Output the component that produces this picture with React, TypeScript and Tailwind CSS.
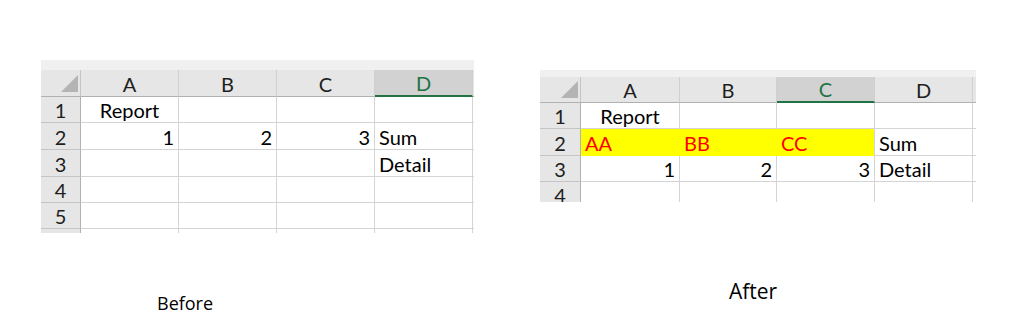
type Cell = { t?: string; align?: 'l' | 'r' | 'c'; red?: boolean; fill?: boolean; lastFill?: boolean };

type Row = { h: string; label: string; cells: Cell[] };

type SheetProps = {
  box: string;
  strip: string;
  header: string;
  widths: string[];
  letters: string[];
  selected: number;
  rows: Row[];
};

const cellFont = "font-['Lato',sans-serif] text-[20px] leading-[20px]";

function Corner({ w }: { w: string }) {
  return (
    <div className={`${w} flex h-full shrink-0 items-end justify-end border-r border-b border-r-[#c4c4c4] border-b-[#b1b1b1] bg-[#e6e6e6] pr-[2px] pb-[4px]`}>
      <svg width="17" height="17" viewBox="0 0 17 17">
        <polygon points="17,0 17,17 0,17" fill="#b4b4b4" />
      </svg>
    </div>
  );
}

function Sheet({ box, strip, header, widths, letters, selected, rows }: SheetProps) {
  return (
    <div className={`${box} flex flex-col overflow-hidden bg-[#f0f0f0] text-[#1e1e1e] ${cellFont}`}>
      <div className={`${strip} shrink-0`} />
      <div className={`${header} flex shrink-0`}>
        <Corner w={widths[0]} />
        {letters.map((l, i) => (
          <div
            key={l}
            className={`${widths[i + 1]} flex h-full shrink-0 items-end justify-center border-r border-r-[#d0d0d0] pb-[2px] ${
              i === selected
                ? 'border-b-2 border-b-[#217346] bg-[#d2d2d2] text-[#217346]'
                : 'border-b border-b-[#b1b1b1] bg-[#e6e6e6]'
            }`}
          >
            {l}
          </div>
        ))}
        <div className="flex-1 border-b border-b-[#b1b1b1] bg-[#e6e6e6]" />
      </div>
      {rows.map((r, ri) => (
        <div key={ri} className={`${r.h} flex shrink-0 bg-white`}>
          <div className={`${widths[0]} flex h-full shrink-0 items-end justify-center border-r border-b border-r-[#b1b1b1] border-b-[#c4c4c4] bg-[#e6e6e6] pb-[2px]`}>
            {r.label}
          </div>
          {r.cells.map((c, ci) => (
            <div
              key={ci}
              className={`${widths[ci + 1]} flex h-full shrink-0 items-end whitespace-nowrap border-r border-b px-[4px] pb-[2px] ${
                c.align === 'r' ? 'justify-end' : c.align === 'c' ? 'justify-center' : 'justify-start'
              } ${c.fill ? 'bg-[#ffff00]' : ''} ${
                c.fill && !c.lastFill ? 'border-r-[#ffff00] border-b-[#ffff00]' : c.fill ? 'border-r-[#d4d4d4] border-b-[#ffff00]' : 'border-[#d4d4d4]'
              } ${c.red ? 'text-[#ff0000]' : 'text-black'}`}
            >
              {c.t}
            </div>
          ))}
          <div className="flex-1 border-b border-b-[#d4d4d4]" />
        </div>
      ))}
    </div>
  );
}

const empty: Cell[] = [{}, {}, {}, {}];

export default function App() {
  return (
    <div className="flex h-[326px] w-[1024px] items-start bg-white">
      <div className="ml-[41px] mt-[60px] flex flex-col">
        <Sheet
          box="h-[173px] w-[433px]"
          strip="h-[10px]"
          header="h-[27px]"
          widths={['w-[40px]', 'w-[98px]', 'w-[98px]', 'w-[98px]', 'w-[98px]']}
          letters={['A', 'B', 'C', 'D']}
          selected={3}
          rows={[
            { h: 'h-[26px]', label: '1', cells: [{ t: 'Report', align: 'c' }, {}, {}, {}] },
            { h: 'h-[27px]', label: '2', cells: [{ t: '1', align: 'r' }, { t: '2', align: 'r' }, { t: '3', align: 'r' }, { t: 'Sum' }] },
            { h: 'h-[27px]', label: '3', cells: [{}, {}, {}, { t: 'Detail' }] },
            { h: 'h-[26px]', label: '4', cells: empty },
            { h: 'h-[26px]', label: '5', cells: empty },
            { h: 'h-[26px]', label: '', cells: empty },
          ]}
        />
        <p className="ml-[116px] mt-[59px] font-['Open_Sans',sans-serif] text-[18px] leading-[22px] text-black">Before</p>
      </div>
      <div className="ml-[66px] mt-[70px] flex flex-col">
        <Sheet
          box="h-[132px] w-[436px]"
          strip="h-[7px]"
          header="h-[26px]"
          widths={['w-[41px]', 'w-[99px]', 'w-[97px]', 'w-[98px]', 'w-[98px]']}
          letters={['A', 'B', 'C', 'D']}
          selected={2}
          rows={[
            { h: 'h-[26px]', label: '1', cells: [{ t: 'Report', align: 'c' }, {}, {}, {}] },
            {
              h: 'h-[27px]',
              label: '2',
              cells: [
                { t: 'AA', red: true, fill: true },
                { t: 'BB', red: true, fill: true },
                { t: 'CC', red: true, fill: true, lastFill: true },
                { t: 'Sum' },
              ],
            },
            { h: 'h-[26px]', label: '3', cells: [{ t: '1', align: 'r' }, { t: '2', align: 'r' }, { t: '3', align: 'r' }, { t: 'Detail' }] },
            { h: 'h-[26px]', label: '4', cells: empty },
          ]}
        />
        <p className="ml-[189px] mt-[77px] font-['Open_Sans',sans-serif] text-[21px] leading-[25px] text-black">After</p>
      </div>
    </div>
  );
}
